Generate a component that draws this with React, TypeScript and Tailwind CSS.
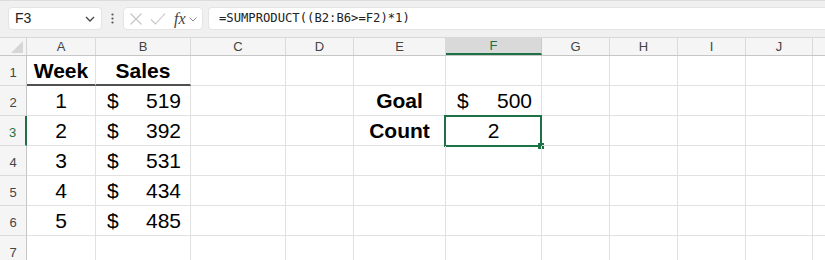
import React from "react";

const colW = [
  "w-[27px]",
  "w-[69px]",
  "w-[95px]",
  "w-[95px]",
  "w-[68px]",
  "w-[92px]",
  "w-[96px]",
  "w-[68px]",
  "w-[68px]",
  "w-[68px]",
  "w-[67px]",
  "w-[68px]",
];
const letters = ["A", "B", "C", "D", "E", "F", "G", "H", "I", "J", ""];

type Cell = { kind: "center" | "bold" | "acct" | "empty"; v?: string };

const rows: Cell[][] = [
  [{ kind: "bold", v: "Week" }, { kind: "bold", v: "Sales" }, { kind: "empty" }, { kind: "empty" }, { kind: "empty" }, { kind: "empty" }],
  [{ kind: "center", v: "1" }, { kind: "acct", v: "519" }, { kind: "empty" }, { kind: "empty" }, { kind: "bold", v: "Goal" }, { kind: "acct", v: "500" }],
  [{ kind: "center", v: "2" }, { kind: "acct", v: "392" }, { kind: "empty" }, { kind: "empty" }, { kind: "bold", v: "Count" }, { kind: "center", v: "2" }],
  [{ kind: "center", v: "3" }, { kind: "acct", v: "531" }],
  [{ kind: "center", v: "4" }, { kind: "acct", v: "434" }],
  [{ kind: "center", v: "5" }, { kind: "acct", v: "485" }],
  [],
];

function CellContent({ c }: { c?: Cell }) {
  if (!c || c.kind === "empty") return null;
  if (c.kind === "bold")
    return <div className="w-full h-full flex items-center justify-center font-bold text-[21px] text-black pt-[1px]">{c.v}</div>;
  if (c.kind === "center")
    return <div className="w-full h-full flex items-center justify-center text-[21px] text-black pt-[1px]">{c.v}</div>;
  return (
    <div className="w-full h-full flex items-center justify-between pl-[11px] pr-[9px] text-[21px] text-black pt-[1px]">
      <span>$</span>
      <span>{c.v}</span>
    </div>
  );
}

export default function App() {
  return (
    <div className="w-[825px] h-[260px] overflow-hidden bg-white" style={{ fontFamily: '"Liberation Sans", Arial, sans-serif' }}>
      {/* toolbar */}
      <div className="h-[37px] bg-[#f0f0f0] border-t border-[#dcdcdc] flex items-start pt-[6px] pl-[8px]">
        <div className="w-[94px] h-[23px] bg-white rounded-[4px] border border-[#e4e4e4] flex items-center justify-between pl-[6px] pr-[6px]">
          <span className="text-[14px] text-[#222]">F3</span>
          <svg width="10" height="6" viewBox="0 0 10 6" className="mt-[1px]">
            <path d="M1 1 L5 5 L9 1" fill="none" stroke="#444" strokeWidth="1.3" />
          </svg>
        </div>
        <div className="w-[21px] h-[23px] flex items-center justify-center">
          <svg width="3" height="11" viewBox="0 0 3 11">
            <circle cx="1.5" cy="1.5" r="1.1" fill="#555" />
            <circle cx="1.5" cy="5.5" r="1.1" fill="#555" />
            <circle cx="1.5" cy="9.5" r="1.1" fill="#555" />
          </svg>
        </div>
        <div className="w-[80px] h-[23px] bg-white rounded-[4px] border border-[#e4e4e4] flex items-center pl-[4px]">
          <svg width="14" height="14" viewBox="0 0 14 14" className="ml-[1px]">
            <path d="M1.5 1.5 L12.5 12.5 M12.5 1.5 L1.5 12.5" stroke="#c4c4c4" strokeWidth="1.1" fill="none" />
          </svg>
          <svg width="16" height="14" viewBox="0 0 16 14" className="ml-[7px]">
            <path d="M1 7.5 L5.5 12 L15 1.5" stroke="#c4c4c4" strokeWidth="1.1" fill="none" />
          </svg>
          <span className="ml-[8px] italic text-[16px] text-[#444] leading-none" style={{ fontFamily: '"Liberation Serif", "Times New Roman", serif' }}>
            fx
          </span>
          <svg width="8" height="5" viewBox="0 0 8 5" className="ml-[3px] mt-[2px]">
            <path d="M0.5 0.5 L4 4 L7.5 0.5" fill="none" stroke="#888" strokeWidth="1" />
          </svg>
        </div>
        <div className="ml-[5px] flex-1 h-[23px] bg-white rounded-l-[4px] border border-r-0 border-[#e4e4e4] flex items-center pl-[10px]">
          <span className="text-[12.2px] text-[#222]" style={{ fontFamily: '"DejaVu Sans Mono", "Liberation Mono", monospace' }}>
            =SUMPRODUCT((B2:B6&gt;=F2)*1)
          </span>
        </div>
      </div>

      {/* column header */}
      <div className="flex h-[19px] bg-[#f5f5f5] border-b border-[#c6c6c6] border-t border-t-[#d8d8d8]">
        <div className={`${colW[0]} border-r border-[#d4d4d4] relative shrink-0`}>
          <svg width="12" height="12" viewBox="0 0 12 12" className="absolute right-[3px] bottom-[2px]">
            <path d="M12 0 L12 12 L0 12 Z" fill="#d6d6d6" />
          </svg>
        </div>
        {letters.map((l, i) => (
          <div
            key={i}
            className={`${colW[i + 1]} shrink-0 flex items-center justify-center text-[13px] border-r ${
              l === "F" ? "bg-[#d9d9d9] text-[#1e7145] border-b-2 border-b-[#1e7145] border-r-[#c8c8c8]" : "text-[#444] border-[#dadada]"
            }`}
          >
            {l}
          </div>
        ))}
      </div>

      {/* rows */}
      {rows.map((r, ri) => (
        <div key={ri} className="flex h-[30px]">
          <div
            className={`${colW[0]} shrink-0 bg-[#f5f5f5] flex items-center justify-center text-[13px] pt-[4px] border-b border-[#dadada] ${
              ri === 2 ? "text-[#1e7145] border-r-2 border-r-[#1e7145]" : "text-[#444] border-r border-r-[#c6c6c6]"
            }`}
          >
            {ri + 1}
          </div>
          {letters.map((_, ci) => {
            const c = r[ci];
            const thick = ri === 0 && ci < 2;
            const sel = ri === 2 && ci === 5;
            return (
              <div
                key={ci}
                className={`${colW[ci + 1]} shrink-0 relative border-r border-[#e1e1e1] ${
                  thick ? "border-b-2 border-b-[#505050]" : "border-b border-b-[#e1e1e1]"
                }`}
              >
                <CellContent c={c} />
                {sel && (
                  <div className="absolute -left-[2px] -top-[1px] w-[98px] h-[32px] border-2 border-[#1e7145]">
                    <div className="absolute -right-[4px] -bottom-[4px] w-[6px] h-[6px] bg-[#1e7145]" />
                  </div>
                )}
              </div>
            );
          })}
        </div>
      ))}
    </div>
  );
}
